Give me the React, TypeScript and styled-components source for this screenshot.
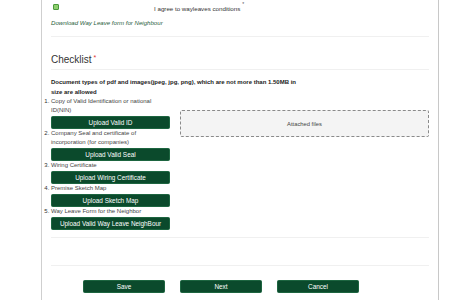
import React from "react"
import styled, {createGlobalStyle} from "styled-components"

const GlobalStyle = createGlobalStyle`
  html, body {
    margin: 0;
    padding: 0;
    background: #fff;
    font-family: "Liberation Sans", Arial, Helvetica, sans-serif;
  }
`

const Page = styled.div`
  width: 450px;
  height: 300px;
  overflow: hidden;
  padding-left: 41px;
  box-sizing: border-box;
`

const Card = styled.div`
  width: 398px;
  box-sizing: border-box;
  border-left: 1px solid #cfcfcf;
  border-right: 1.5px solid #c8c8c8;
  padding: 0 9px 20px 9px;
  color: #222;
`

const AgreeRow = styled.div`
  display: flex;
  align-items: center;
  height: 12px;
  padding-left: 2px;
`

const Check = styled.span`
  width: 4px;
  height: 4px;
  border: 1px solid #4a9a3a;
  background: #8fcf6f;
  border-radius: 1px;
  margin-top: 1px;
`

const AgreeLabel = styled.span`
  margin-left: 95px;
  font-size: 6.2px;
  color: #333;
`

const Star = styled.sup<{$red?: boolean; $big?: boolean}>`
  color: ${({$red}) => $red ? "#d33" : "#555"};
  font-size: ${({$big}) => $big ? "7px" : "5px"};
  margin-left: 2px;
  vertical-align: ${({$big}) => $big ? "3px" : "5px"};
`

const DownloadLink = styled.a`
  display: block;
  margin-top: 7px;
  font-size: 6.1px;
  font-style: italic;
  color: #1f5d3a;
  text-decoration: none;
`

const Rule = styled.hr<{$m: string}>`
  border: none;
  border-top: 1px solid #f0f0f0;
  margin: ${({$m}) => $m};
`

const Heading = styled.h3`
  margin: 0;
  font-size: 10px;
  font-weight: normal;
  color: #333;
  line-height: 14px;
`

const Note = styled.p`
  margin: 0;
  width: 250px;
  font-size: 6px;
  font-weight: bold;
  line-height: 10px;
  color: #222;
`

const Columns = styled.div`
  display: grid;
  grid-template-columns: 119px 1fr;
  column-gap: 10px;
  align-items: start;
`

const List = styled.ol`
  margin: 0;
  padding: 0;
  list-style-position: outside;
  font-size: 6px;
  color: #444;
`

const Item = styled.li`
  line-height: 9px;
  &::marker {
    color: #333;
  }
`

const UploadButton = styled.button`
  display: block;
  width: 119px;
  height: 13px;
  margin-top: 1px;
  padding: 0;
  border: 1px solid #1d6540;
  border-radius: 1.5px;
  background: #0b4a2c;
  color: #fff;
  font-family: inherit;
  font-size: 6.4px;
  line-height: 11px;
  text-align: center;
  white-space: nowrap;
`

const Attached = styled.div`
  margin-top: 13px;
  height: 27px;
  box-sizing: border-box;
  border: 1px dashed #8a8a8a;
  border-radius: 2px;
  background: #f4f4f4;
  display: flex;
  align-items: center;
  justify-content: center;
  font-size: 5.8px;
  color: #444;
`

const Actions = styled.div`
  display: flex;
  gap: 15px;
  padding-left: 32px;
`

const ActionButton = styled(UploadButton)`
  width: 82px;
  font-size: 6.4px;
  margin-top: 0;
`

const items = [
    {label: "Copy of Valid Identification or national ID(NIN)", button: "Upload Valid ID"},
    {label: "Company Seal and certificate of incorporation (for companies)", button: "Upload Valid Seal"},
    {label: "Wiring Certificate", button: "Upload Wiring Certificate"},
    {label: "Premise Sketch Map", button: "Upload Sketch Map"},
    {label: "Way Leave Form for the Neighbor", button: "Upload Valid Way Leave NeighBour"},
]

export default function App() {
    return <>
        <GlobalStyle/>
        <Page>
            <Card>
                <AgreeRow>
                    <Check/>
                    <AgreeLabel>I agree to wayleaves conditions<Star>*</Star></AgreeLabel>
                </AgreeRow>
                <DownloadLink href="#">Download Way Leave form for Neighbour</DownloadLink>
                <Rule $m="10px 0 14px"/>
                <Heading>Checklist<Star $red $big>*</Star></Heading>
                <Rule $m="2px 0 7px"/>
                <Note>Document types of pdf and images(jpeg, jpg, png), which are not more than 1.50MB in size are
                    allowed</Note>
                <Columns>
                    <List>
                        {items.map(it => <Item key={it.button}>
                            {it.label}
                            <UploadButton>{it.button}</UploadButton>
                        </Item>)}
                    </List>
                    <Attached>Attached files</Attached>
                </Columns>
                <Rule $m="7px 0 27px"/>
                <Rule $m="0 0 14px"/>
                <Actions>
                    <ActionButton>Save</ActionButton>
                    <ActionButton>Next</ActionButton>
                    <ActionButton>Cancel</ActionButton>
                </Actions>
            </Card>
        </Page>
    </>
}
